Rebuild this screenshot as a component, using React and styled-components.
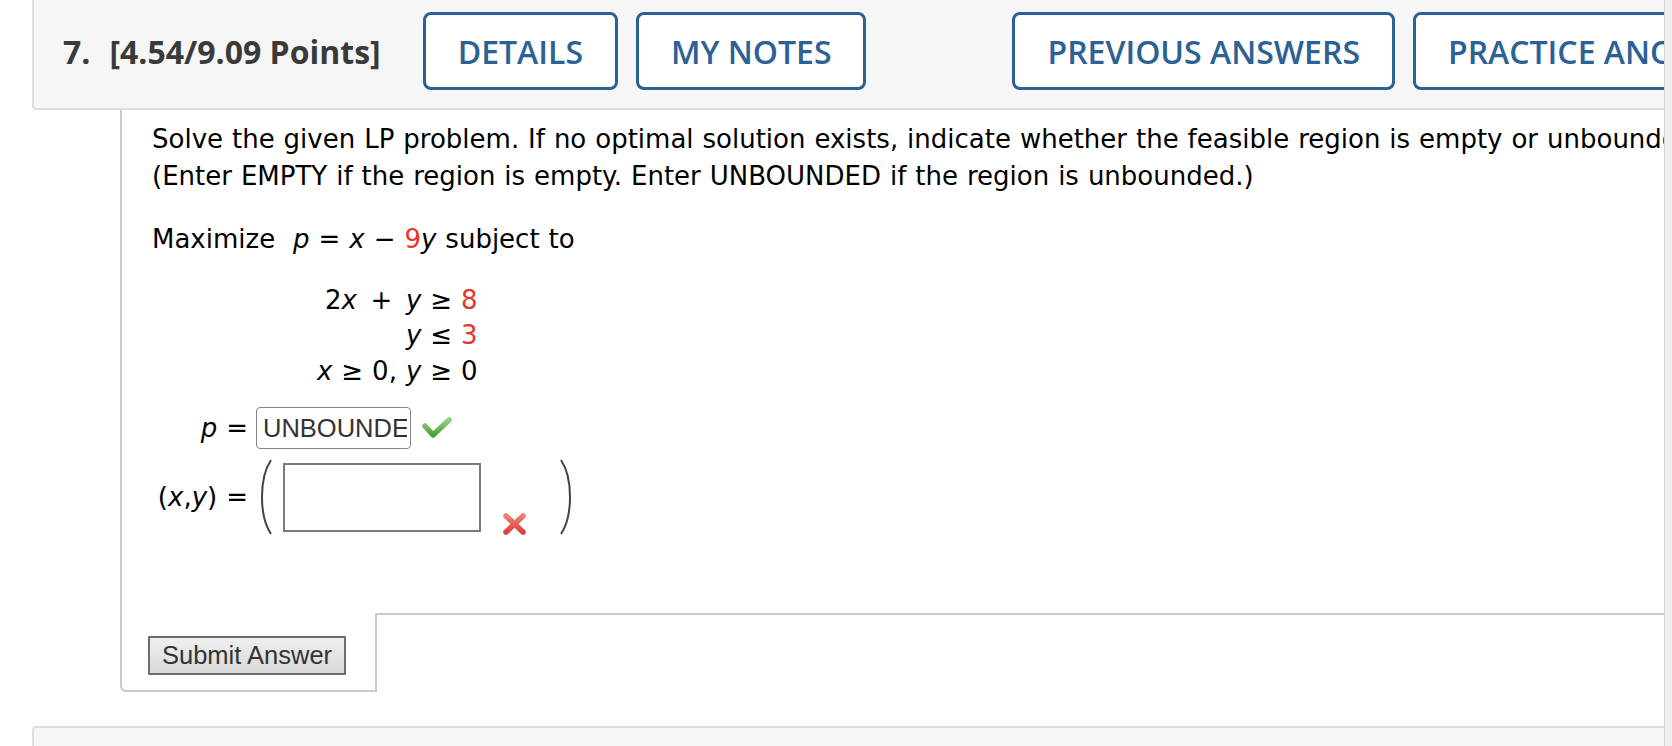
import React from "react";
import styled, { createGlobalStyle } from "styled-components";

const GlobalStyle = createGlobalStyle`
  html, body { margin: 0; padding: 0; background: #fff; overflow: hidden; }
  body { font-family: "DejaVu Sans", Verdana, sans-serif; }
`;

const Page = styled.div`
  display: flex;
  width: 1672px;
  height: 746px;
  overflow: hidden;
`;

const Main = styled.div`
  width: 1664px;
  flex: none;
  overflow: hidden;
  display: flex;
  flex-direction: column;
`;

const ScrollStrip = styled.div`
  flex: 1;
  background: #efefef;
  border-left: 1px solid #d6d6d6;
`;

const Header = styled.header`
  flex: none;
  margin-left: 32px;
  height: 110px;
  box-sizing: border-box;
  padding: 12px 0 0 29px;
  background: #f6f6f6;
  border-left: 2px solid #dedede;
  border-bottom: 2px solid #dedede;
  border-bottom-left-radius: 4px;
  display: flex;
  align-items: flex-start;
  gap: 18px;
  overflow: hidden;
  white-space: nowrap;
`;

const Title = styled.div`
  flex: none;
  height: 78px;
  display: flex;
  align-items: center;
  margin-right: 24px;
  font: 700 32px "Open Sans", sans-serif;
  color: #3a3a3a;
`;

const QNum = styled.span`
  margin-right: 19px;
`;

const TabButton = styled.button`
  flex: none;
  height: 78px;
  box-sizing: border-box;
  padding: 0 32px;
  margin-left: ${(p) => p.$offset || 0}px;
  border: 3px solid #2c6196;
  border-radius: 8px;
  background: #fff;
  color: #2c6196;
  font: 600 32px "Open Sans", sans-serif;
  cursor: pointer;
`;

const Card = styled.section`
  flex: none;
  margin-left: 120px;
  display: flex;
  flex-direction: column;
`;

const Body = styled.div`
  border-left: 2px solid #cccccc;
  padding: 11px 0 77px 30px;
  color: #000;
  font-size: 26px;
  word-spacing: 0.7px;
`;

const Prompt = styled.p`
  margin: 0 0 26px;
  line-height: 37px;
  white-space: nowrap;
`;

const MathLine = styled.div`
  line-height: 37px;
  margin-bottom: 24.6px;
  white-space: pre;
`;

const Var = styled.i`
  font-style: italic;
`;

const Red = styled.span`
  color: #e8352a;
`;

const Constraints = styled.div`
  display: grid;
  width: max-content;
  margin-left: 165px;
  grid-template-columns: auto 31px auto auto auto;
  column-gap: 9px;
  line-height: 35.5px;
  white-space: pre;
`;

const Cell = styled.span`
  grid-column: ${(p) => (p.$span ? `span ${p.$span}` : "auto")};
  justify-self: ${(p) => (p.$end ? "end" : "center")};
`;

const Answers = styled.div`
  display: grid;
  grid-template-columns: 96px auto;
  column-gap: 8px;
  row-gap: 9px;
  margin-top: 18px;
  align-items: center;
`;

const Label = styled.div`
  display: flex;
  justify-content: flex-end;
  align-items: center;
  gap: 9px;
  white-space: nowrap;
  line-height: 1;
`;

const AnswerRow = styled.div`
  display: flex;
  align-items: center;
`;

const TextAnswer = styled.input`
  width: 155px;
  height: 42px;
  box-sizing: border-box;
  border: 1.5px solid #858585;
  border-radius: 4px;
  padding: 0 3px 0 6px;
  font: 25.5px "Liberation Sans", Arial, sans-serif;
  color: #333;
  background: #fff;
  outline: none;
`;

const PointAnswer = styled.input`
  width: 198px;
  height: 69px;
  box-sizing: border-box;
  border: 2px solid #7a7a7a;
  border-radius: 0;
  background: #fff;
  margin: 0 20px 0 9px;
  outline: none;
`;

const MarkIcon = styled.svg`
  flex: none;
  margin-left: ${(p) => p.$left || 0}px;
  align-self: ${(p) => (p.$bottom ? "flex-end" : "center")};
`;

const Paren = styled.svg`
  flex: none;
  margin-left: ${(p) => p.$left || 0}px;
`;

const Footer = styled.div`
  display: flex;
`;

const SubmitCell = styled.div`
  flex: none;
  width: 257px;
  box-sizing: border-box;
  padding: 23px 0 15px 26px;
  border: 2px solid #c9c9c9;
  border-top: none;
  border-bottom-left-radius: 6px;
`;

const Filler = styled.div`
  flex: 1;
  border-top: 2px solid #c9c9c9;
`;

const SubmitButton = styled.button`
  height: 39px;
  box-sizing: border-box;
  padding: 0 12px;
  border: 2px solid #6d6d6d;
  border-radius: 1px;
  background: linear-gradient(#efefef, #d9d9d9);
  color: #333;
  font: 25.5px "Liberation Sans", Arial, sans-serif;
  line-height: 1;
  cursor: pointer;
`;

const NextPanel = styled.div`
  flex: none;
  margin: 34px 0 0 32px;
  height: 60px;
  background: #f6f6f6;
  border-top: 2px solid #dedede;
  border-left: 2px solid #dedede;
  border-top-left-radius: 4px;
`;

const Check = () => (
  <MarkIcon $left={10} width="32" height="24" viewBox="0 0 32 24">
    <defs>
      <linearGradient id="chk" x1="0" y1="0" x2="0" y2="1">
        <stop offset="0" stopColor="#8fd27f" />
        <stop offset="1" stopColor="#4f9d40" />
      </linearGradient>
    </defs>
    <path
      d="M4 10 L12 19 L28 4"
      fill="none"
      stroke="url(#chk)"
      strokeWidth="5.5"
      strokeLinecap="round"
      strokeLinejoin="round"
    />
  </MarkIcon>
);

const Cross = () => (
  <MarkIcon $bottom width="27" height="24" viewBox="0 0 27 24">
    <defs>
      <linearGradient id="crs" x1="0" y1="0" x2="0" y2="1">
        <stop offset="0" stopColor="#f07d75" />
        <stop offset="1" stopColor="#d9443c" />
      </linearGradient>
    </defs>
    <path
      d="M5 4 L22 20 M22 4 L5 20"
      fill="none"
      stroke="url(#crs)"
      strokeWidth="5.5"
      strokeLinecap="round"
    />
  </MarkIcon>
);

const LeftParen = () => (
  <Paren width="18" height="78" viewBox="0 0 18 78">
    <path d="M15 2 C 3 20, 3 58, 15 76" fill="none" stroke="#444" strokeWidth="2" />
  </Paren>
);

const RightParen = () => (
  <Paren $left={30} width="18" height="78" viewBox="0 0 18 78">
    <path d="M3 2 C 15 20, 15 58, 3 76" fill="none" stroke="#444" strokeWidth="2" />
  </Paren>
);

export default function App() {
  return (
    <>
      <GlobalStyle />
      <Page>
        <Main>
          <Header>
            <Title>
              <QNum>7.</QNum>[4.54/9.09 Points]
            </Title>
            <TabButton>DETAILS</TabButton>
            <TabButton>MY NOTES</TabButton>
            <TabButton $offset={128}>PREVIOUS ANSWERS</TabButton>
            <TabButton>PRACTICE ANOTHER</TabButton>
          </Header>

          <Card>
            <Body>
              <Prompt>
                Solve the given LP problem. If no optimal solution exists, indicate whether the feasible region is empty or unbounded.
                <br />
                (Enter EMPTY if the region is empty. Enter UNBOUNDED if the region is unbounded.)
              </Prompt>

              <MathLine>
                {"Maximize  "}
                <Var>p</Var>
                {" = "}
                <Var>x</Var>
                {" − "}
                <Red>9</Red>
                <Var>y</Var>
                {" subject to"}
              </MathLine>

              <Constraints>
                <Cell $end>
                  2<Var>x</Var>
                </Cell>
                <Cell>+</Cell>
                <Cell>
                  <Var>y</Var>
                </Cell>
                <Cell>≥</Cell>
                <Cell>
                  <Red>8</Red>
                </Cell>

                <Cell $span={2} />
                <Cell>
                  <Var>y</Var>
                </Cell>
                <Cell>≤</Cell>
                <Cell>
                  <Red>3</Red>
                </Cell>

                <Cell $span={2} $end>
                  <Var>x</Var>
                  {" ≥ 0,"}
                </Cell>
                <Cell>
                  <Var>y</Var>
                </Cell>
                <Cell>≥</Cell>
                <Cell>0</Cell>
              </Constraints>

              <Answers>
                <Label>
                  <Var>p</Var>
                  <span>=</span>
                </Label>
                <AnswerRow>
                  <TextAnswer readOnly value="UNBOUNDED" />
                  <Check />
                </AnswerRow>

                <Label>
                  <span>
                    (<Var>x</Var>,<Var>y</Var>)
                  </span>
                  <span>=</span>
                </Label>
                <AnswerRow>
                  <LeftParen />
                  <PointAnswer readOnly value="" />
                  <Cross />
                  <RightParen />
                </AnswerRow>
              </Answers>
            </Body>

            <Footer>
              <SubmitCell>
                <SubmitButton>Submit Answer</SubmitButton>
              </SubmitCell>
              <Filler />
            </Footer>
          </Card>

          <NextPanel />
        </Main>
        <ScrollStrip />
      </Page>
    </>
  );
}
